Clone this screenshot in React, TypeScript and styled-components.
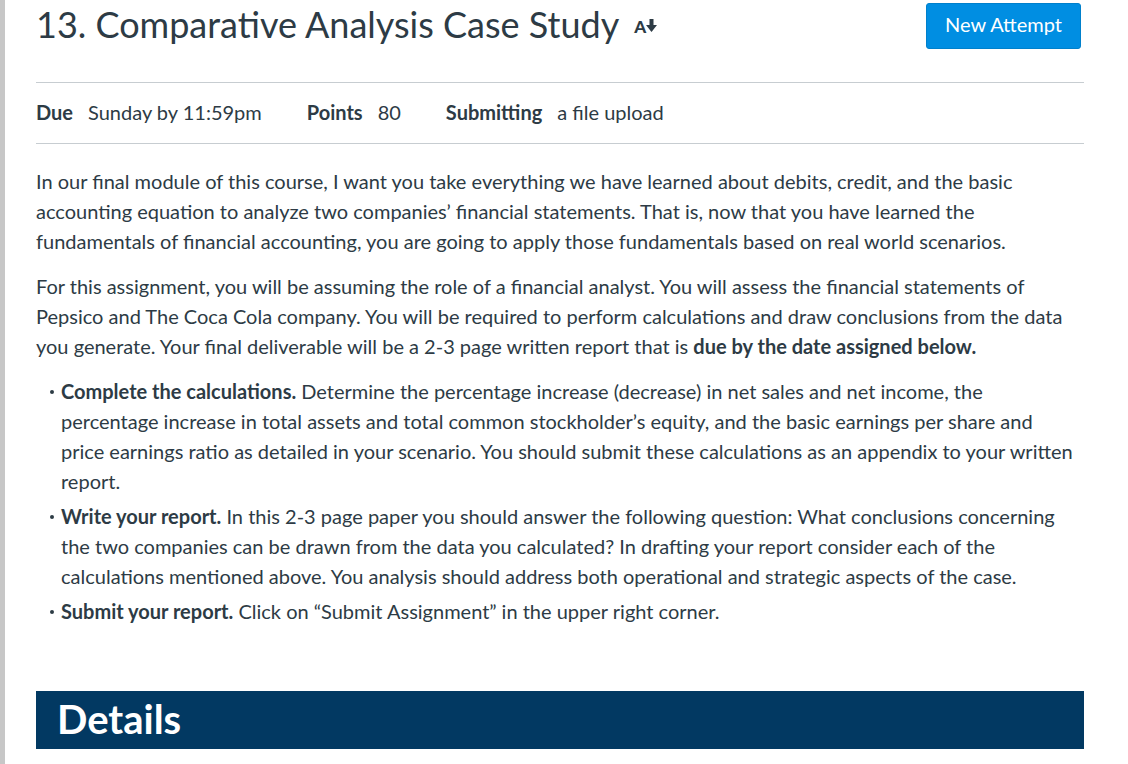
import React from "react";
import styled, { createGlobalStyle } from "styled-components";

const Global = createGlobalStyle`
  html, body { margin: 0; padding: 0; background: #fff; }
  body { font-family: Lato, "Open Sans", sans-serif; color: #2d3b45; }
  * { box-sizing: border-box; }
`;

const Page = styled.div`
  min-height: 764px;
  border-left: 5px solid #c7c7c7;
  padding-left: 31px;
`;

const Content = styled.div`
  width: 1048px;
`;

const TitleRow = styled.div`
  display: flex;
  justify-content: space-between;
  align-items: flex-start;
  height: 83px;
  border-bottom: 1px solid #c7cdd1;
`;

const Title = styled.h1`
  margin: 1px 0 0 0;
  font-size: 36px;
  font-weight: 400;
  line-height: 46px;
  display: flex;
  align-items: center;
  gap: 15px;
`;

const IconWrap = styled.span`
  display: inline-flex;
  align-items: flex-end;
  height: 14px;
  margin-top: 4px;
`;

const IconA = styled.span`
  font-size: 17px;
  font-weight: 900;
  line-height: 12px;
  color: #2d3b45;
`;

const Button = styled.button`
  margin: 3px 3px 0 0;
  height: 46px;
  width: 155px;
  border: 1px solid #0080cc;
  border-radius: 3px;
  background: #008ee2;
  color: #fff;
  font-family: Lato, sans-serif;
  font-size: 20px;
  padding: 0 0 4px 0;
`;

const Meta = styled.ul`
  list-style: none;
  margin: 0;
  padding: 0 0 2px 0;
  height: 61px;
  display: flex;
  align-items: center;
  gap: 45px;
  border-bottom: 1px solid #c7cdd1;
  font-size: 20px;
`;

const MetaItem = styled.li`
  display: flex;
  gap: 15px;
  line-height: 1;
`;

const MetaLabel = styled.span`
  font-weight: 700;
`;

const Body = styled.div`
  padding-top: 22px;
  font-size: 20px;
  line-height: 30px;
`;

const Para = styled.p`
  margin: 0 0 15px 0;
`;

const List = styled.ul`
  margin: 0;
  padding: 0 8px 0 25px;
  list-style: none;
`;

const Item = styled.li`
  position: relative;
  margin-bottom: 5px;
  &::before {
    content: "";
    position: absolute;
    left: -11px;
    top: 14px;
    width: 4px;
    height: 4px;
    border-radius: 50%;
    background: #2d3b45;
  }
`;

const Details = styled.h2`
  margin: 65px 0 0 0;
  height: 58px;
  background: #023962;
  color: #fff;
  font-size: 40px;
  font-weight: 700;
  line-height: 56px;
  padding-left: 21px;
`;

const ArrowIcon = () => (
  <svg width="11" height="14" viewBox="0 0 11 14">
    <rect x="3.5" y="0" width="4" height="7" fill="#2d3b45" />
    <polygon points="0,6 11,6 5.5,13" fill="#2d3b45" />
  </svg>
);

export default function App() {
  return (
    <>
      <Global />
      <Page>
        <Content>
          <TitleRow>
            <Title>
              13. Comparative Analysis Case Study
              <IconWrap>
                <IconA>A</IconA>
                <ArrowIcon />
              </IconWrap>
            </Title>
            <Button>New Attempt</Button>
          </TitleRow>
          <Meta>
            <MetaItem>
              <MetaLabel>Due</MetaLabel>
              <span>Sunday by 11:59pm</span>
            </MetaItem>
            <MetaItem>
              <MetaLabel>Points</MetaLabel>
              <span>80</span>
            </MetaItem>
            <MetaItem>
              <MetaLabel>Submitting</MetaLabel>
              <span>a file upload</span>
            </MetaItem>
          </Meta>
          <Body>
            <Para>
              In our final module of this course, I want you take everything we have learned about debits, credit, and the basic
              accounting equation to analyze two companies’ financial statements. That is, now that you have learned the
              fundamentals of financial accounting, you are going to apply those fundamentals based on real world scenarios.
            </Para>
            <Para>
              For this assignment, you will be assuming the role of a financial analyst. You will assess the financial statements of
              Pepsico and The Coca Cola company. You will be required to perform calculations and draw conclusions from the data
              you generate. Your final deliverable will be a 2-3 page written report that is <b>due by the date assigned below.</b>
            </Para>
            <List>
              <Item>
                <b>Complete the calculations.</b> Determine the percentage increase (decrease) in net sales and net income, the
                percentage increase in total assets and total common stockholder’s equity, and the basic earnings per share and
                price earnings ratio as detailed in your scenario. You should submit these calculations as an appendix to your written
                report.
              </Item>
              <Item>
                <b>Write your report.</b> In this 2-3 page paper you should answer the following question: What conclusions concerning
                the two companies can be drawn from the data you calculated? In drafting your report consider each of the
                calculations mentioned above. You analysis should address both operational and strategic aspects of the case.
              </Item>
              <Item>
                <b>Submit your report.</b> Click on “Submit Assignment” in the upper right corner.
              </Item>
            </List>
            <Details>Details</Details>
          </Body>
        </Content>
      </Page>
    </>
  );
}
